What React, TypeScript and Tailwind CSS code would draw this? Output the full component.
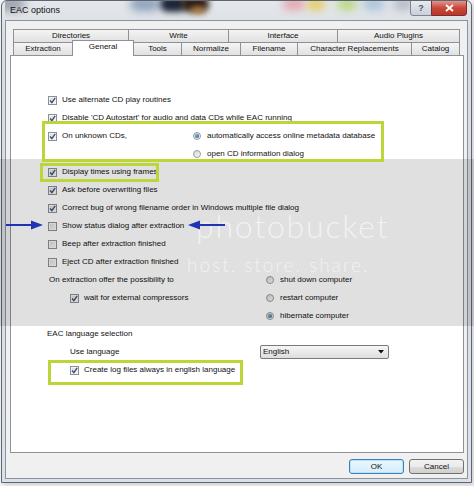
import React from "react";

// Tab strip cells (widths include the shared 1px borders)
const topTabs = [
  { label: "Directories", cls: "w-[116px]" },
  { label: "Write", cls: "w-[101px]" },
  { label: "Interface", cls: "w-[110px]" },
  { label: "Audio Plugins", cls: "w-[123px]" },
];

const bottomTabs = [
  { label: "Extraction", cls: "w-[60px]" },
  { label: "General", cls: "w-[62px]", active: true },
  { label: "Tools", cls: "w-[49px]" },
  { label: "Normalize", cls: "w-[60px]" },
  { label: "Filename", cls: "w-[58px]" },
  { label: "Character Replacements", cls: "w-[115px]" },
  { label: "Catalog", cls: "w-[49px]" },
];

function CheckBox({ checked = false }: { checked?: boolean }) {
  return (
    <span className="flex h-[9px] w-[9px] shrink-0 items-center justify-center border border-[#8e8f8f] bg-[linear-gradient(135deg,#d8d8d8,#f7f7f7)] shadow-[inset_0_0_0_1px_#f4f4f4]">
      {checked && (
        <svg width="7" height="7" viewBox="0 0 7 7">
          <path d="M1 3.6 L2.9 5.6 L6.2 0.9" fill="none" stroke="#3d4f86" strokeWidth="1.4" />
        </svg>
      )}
    </span>
  );
}

function Check({ checked = false, label }: { checked?: boolean; label: string }) {
  return (
    <span className="flex items-center gap-[5px] pl-[1px]">
      <CheckBox checked={checked} />
      <span className="whitespace-nowrap">{label}</span>
    </span>
  );
}

function Radio({ checked = false, label }: { checked?: boolean; label: string }) {
  return (
    <span className="flex items-center gap-[6px]">
      <span className="flex h-[8px] w-[8px] shrink-0 items-center justify-center rounded-full border border-[#9a9a9a] bg-[linear-gradient(135deg,#d5d5d5,#f8f8f8)]">
        {checked && <span className="h-[4px] w-[4px] rounded-full bg-[radial-gradient(circle_at_35%_35%,#6fb3d8,#1d4f7a)]" />}
      </span>
      <span className="whitespace-nowrap">{label}</span>
    </span>
  );
}

function Row({ children }: { children?: React.ReactNode }) {
  return <div className="flex h-[18px] items-center">{children}</div>;
}

function TitleBar() {
  return (
    <div className="relative flex h-[19px] items-start justify-between overflow-hidden">
      {/* blurred glass behind the caption */}
      <span className="absolute left-[-10px] top-[-4px] h-[14px] w-[30px] rounded-full bg-[#9aa0aa] blur-[5px]" />
      <span className="absolute left-[125px] top-[-4px] h-[14px] w-[30px] rounded-full bg-[#8ea2bd] blur-[4px]" />
      <span className="absolute left-[155px] top-[-5px] h-[16px] w-[26px] rounded-full bg-[#1c2538] blur-[3px]" />
      <span className="absolute left-[176px] top-[-5px] h-[16px] w-[28px] rounded-full bg-[#2a1a10] blur-[3px]" />
      <span className="absolute left-[186px] top-[6px] h-[6px] w-[14px] rounded-full bg-[#c48a44] blur-[3px]" />
      <span className="absolute left-[278px] top-[-3px] h-[12px] w-[22px] rounded-full bg-[#e5a3ad] blur-[4px]" />
      <span className="absolute left-[302px] top-[-3px] h-[12px] w-[18px] rounded-full bg-[#e8c95a] blur-[4px]" />
      <span className="absolute left-[332px] top-[-3px] h-[12px] w-[20px] rounded-full bg-[#b7d77c] blur-[4px]" />
      <span className="absolute left-[358px] top-[-3px] h-[12px] w-[22px] rounded-full bg-[#a9c2da] blur-[4px]" />
      <span className="absolute left-[388px] top-[-3px] h-[12px] w-[20px] rounded-full bg-[#b4b9c6] blur-[4px]" />

      <span className="relative pl-[5px] pt-[4px] text-[9px] leading-[10px] text-[#111]">EAC options</span>

      <div className="relative -mt-[1px] mr-[1px] flex">
        <span className="flex h-[16px] w-[22px] items-center justify-center rounded-bl-[3px] border border-[#7b8594] bg-[linear-gradient(#e7ebef,#c9d0d8)] text-[9px] font-bold leading-none text-[#4a5566]">
          ?
        </span>
        <span className="-ml-px flex h-[16px] w-[36px] items-center justify-center rounded-br-[3px] border border-[#7a2f2a] bg-[linear-gradient(#e3958a,#c8473a_50%,#b8362b)]">
          <svg width="9" height="8" viewBox="0 0 9 8">
            <path d="M1 1 L8 7 M8 1 L1 7" stroke="#fff" strokeWidth="1.8" />
          </svg>
        </span>
      </div>
    </div>
  );
}

function Tabs() {
  return (
    <div className="ml-[3px]">
      <div className="flex h-[13px]">
        {topTabs.map((t, i) => (
          <div
            key={t.label}
            className={`${t.cls} ${i > 0 ? "-ml-px" : ""} flex h-[13px] items-center justify-center border-x border-t border-[#8e9298] bg-[linear-gradient(#f4f4f4,#e1e1e1)]`}
          >
            {t.label}
          </div>
        ))}
      </div>
      <div className="flex h-[13px] items-start">
        {bottomTabs.map((t, i) =>
          t.active ? (
            <div
              key={t.label}
              className={`${t.cls} relative z-10 -ml-px -mt-[2px] flex h-[16px] items-start justify-center border-x border-t border-[#8e9298] bg-white pt-[2px]`}
            >
              {t.label}
            </div>
          ) : (
            <div
              key={t.label}
              className={`${t.cls} ${i > 0 ? "-ml-px" : ""} flex h-[13px] items-center justify-center border-x border-t border-[#8e9298] bg-[linear-gradient(#f4f4f4,#e1e1e1)]`}
            >
              {t.label}
            </div>
          )
        )}
      </div>
    </div>
  );
}

function GeneralPanel() {
  return (
    <div className="h-[398px] border border-[#8e9298] bg-white pl-[36px] pt-[35px]">
      <Row>
        <Check checked label="Use alternate CD play routines" />
      </Row>
      <Row>
        <Check checked label="Disable 'CD Autostart' for audio and data CDs while EAC running" />
      </Row>
      <Row>
        <span className="w-[146px]">
          <Check checked label="On unknown CDs," />
        </span>
        <Radio checked label="automatically access online metadata database" />
      </Row>
      <Row>
        <span className="w-[146px]" />
        <Radio label="open CD information dialog" />
      </Row>
      <Row>
        <Check checked label="Display times using frames" />
      </Row>
      <Row>
        <Check checked label="Ask before overwriting files" />
      </Row>
      <Row>
        <Check checked label="Correct bug of wrong filename order in Windows multiple file dialog" />
      </Row>
      <Row>
        <Check label="Show status dialog after extraction" />
      </Row>
      <Row>
        <Check label="Beep after extraction finished" />
      </Row>
      <Row>
        <Check label="Eject CD after extraction finished" />
      </Row>
      <Row>
        <span className="w-[219px] pl-[2px]">On extraction offer the possibility to</span>
        <Radio label="shut down computer" />
      </Row>
      <Row>
        <span className="w-[219px] pl-[22px]">
          <Check checked label="wait for external compressors" />
        </span>
        <Radio label="restart computer" />
      </Row>
      <Row>
        <span className="w-[219px]" />
        <Radio checked label="hibernate computer" />
      </Row>
      <Row>
        <span>EAC language selection</span>
      </Row>
      <Row>
        <span className="w-[213px] pl-[23px]">Use language</span>
        <div className="flex h-[14px] w-[129px] items-center justify-between rounded-[2px] border border-[#7a7a7a] bg-[linear-gradient(#f6f6f6,#dedede)] pl-[2px] pr-[4px]">
          <span>English</span>
          <svg width="6" height="4" viewBox="0 0 6 4">
            <path d="M0 0 H6 L3 3.5 Z" fill="#111" />
          </svg>
        </div>
      </Row>
      <Row>
        <span className="pl-[22px]">
          <Check checked label="Create log files always in english language" />
        </span>
      </Row>
    </div>
  );
}

function Arrow({ dir }: { dir: "right" | "left" }) {
  return (
    <svg width="38" height="10" viewBox="0 0 38 10">
      {dir === "right" ? (
        <>
          <path d="M0 5 H28" stroke="#1f33b5" strokeWidth="2" />
          <path d="M25 0.5 L37 5 L25 9.5 Z" fill="#1f33b5" />
        </>
      ) : (
        <>
          <path d="M10 5 H38" stroke="#1f33b5" strokeWidth="2" />
          <path d="M13 0.5 L1 5 L13 9.5 Z" fill="#1f33b5" />
        </>
      )}
    </svg>
  );
}

export default function App() {
  return (
    <div className="relative h-[486px] w-[474px] overflow-hidden bg-[#f3f3f3] font-['Liberation_Sans',Arial,sans-serif] text-[8px] leading-none text-[#111]">
      {/* window */}
      <div className="ml-[1px] w-[471px] rounded-t-[6px] border border-[#5d6670] bg-[linear-gradient(#e4e7eb,#d8dde3_40px,#dbe1e8)] px-[3px] pb-[3px] shadow-[2px_2px_4px_rgba(0,0,0,0.15)]">
        <TitleBar />
        <div className="border border-[#8a939e] bg-[#f0f0f0] px-[3px] pb-[4px] pl-[4px] pt-[8px]">
          <Tabs />
          <GeneralPanel />
          <div className="mt-[6px] flex justify-end gap-[5px]">
            <button className="flex h-[15px] w-[55px] items-center justify-center rounded-[3px] border border-[#3c7fb1] bg-[linear-gradient(#eaf6fd,#d4eefb)] shadow-[inset_0_0_0_1px_#bfe3f8]">
              OK
            </button>
            <button className="flex h-[15px] w-[55px] items-center justify-center rounded-[3px] border border-[#707070] bg-[linear-gradient(#f2f2f2,#ebebeb_50%,#dddddd_51%,#cfcfcf)]">
              Cancel
            </button>
          </div>
        </div>
      </div>

      {/* grey watermark band */}
      <div className="pointer-events-none absolute inset-x-0 top-[159px] h-[167px] bg-[rgba(0,0,0,0.12)]" />
      <div className="pointer-events-none absolute left-[196px] top-[214px] font-['Lato',sans-serif] text-[32px] font-light leading-[24px] tracking-[1.8px] text-white/60">
        photobucket
      </div>
      <div className="pointer-events-none absolute left-[187px] top-[255px] font-['Lato',sans-serif] text-[19px] font-light leading-none tracking-[2px] text-white/60">
        host. store. share.
      </div>

      {/* highlight frames */}
      <div className="pointer-events-none absolute left-[42px] top-[121px] h-[41px] w-[342px] border-[3px] border-[#bcd63a]" />
      <div className="pointer-events-none absolute left-[40px] top-[163px] h-[19px] w-[119px] border-[3px] border-[#bcd63a]" />
      <div className="pointer-events-none absolute left-[48px] top-[360px] h-[25px] w-[195px] border-[3px] border-[#bcd63a]" />

      {/* arrows */}
      <div className="pointer-events-none absolute left-[6px] top-[220px]">
        <Arrow dir="right" />
      </div>
      <div className="pointer-events-none absolute left-[187px] top-[220px]">
        <Arrow dir="left" />
      </div>
    </div>
  );
}
